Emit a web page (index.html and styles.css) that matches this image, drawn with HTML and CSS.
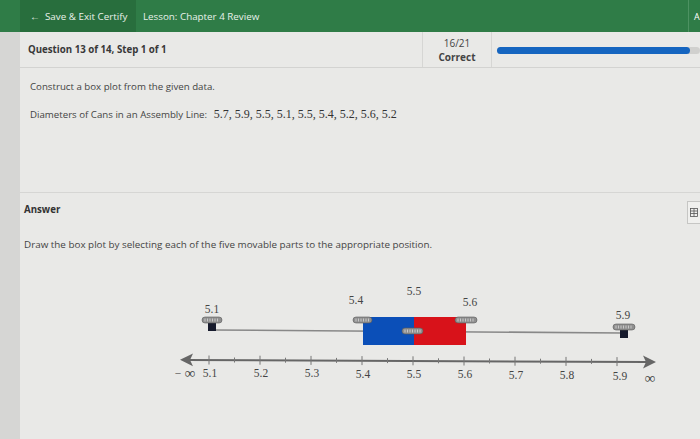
FILE: index.html
```html
<!DOCTYPE html>
<html>
<head>
<meta charset="utf-8">
<link rel="stylesheet" href="styles.css">
</head>
<body>
<div class="page">
  <header class="topbar">
    <div class="tb-pad"></div>
    <div class="tb-save"><span class="arrow">&#8592;</span> Save &amp; Exit Certify</div>
    <div class="tb-lesson">Lesson: Chapter 4 Review</div>
    <div class="tb-fill"></div>
    <div class="tb-right">A</div>
  </header>
  <div class="main">
    <div class="strip"></div>
    <div class="content">
      <div class="qheader">
        <div class="qtitle">Question 13 of 14, Step 1 of 1</div>
        <div class="score"><span class="frac">16/21</span><span class="corr">Correct</span></div>
        <div class="progress"><div class="bar"></div></div>
      </div>
      <section class="question">
        <p class="q1">Construct a box plot from the given data.</p>
        <p class="q2">Diameters of Cans in an Assembly Line: <span class="nums">5.7, 5.9, 5.5, 5.1, 5.5, 5.4, 5.2, 5.6, 5.2</span></p>
      </section>
      <section class="answer">
        <div class="ans-head">
          <h3 class="ans-title">Answer</h3>
          <div class="side-tab">
            <svg width="8" height="9" viewBox="0 0 8 9"><g fill="none" stroke="#555" stroke-width="0.8"><rect x="0.5" y="0.5" width="7" height="8"/><line x1="0.5" y1="3" x2="7.5" y2="3"/><line x1="0.5" y1="5.5" x2="7.5" y2="5.5"/><line x1="4" y1="0.5" x2="4" y2="8.5"/></g></svg>
          </div>
        </div>
        <p class="ans-text">Draw the box plot by selecting each of the five movable parts to the appropriate position.</p>
        <svg class="plot" width="680" height="174" viewBox="20 265 680 174">
          <!-- whisker line -->
          <line x1="213" y1="331" x2="622" y2="334" stroke="#888" stroke-width="1.6"/>
          <!-- box -->
          <rect x="363" y="318" width="51" height="28" fill="#0b4fb8"/>
          <rect x="414" y="318" width="52" height="28" fill="#d8121a"/>
          <!-- whisker squares -->
          <rect x="208" y="324" width="8" height="8" fill="#161a2c"/>
          <rect x="620" y="331" width="8" height="8" fill="#161a2c"/>
          <!-- handle labels -->
          <g font-family="Liberation Serif, serif" font-size="11.5" fill="#444" text-anchor="middle">
            <text x="212" y="314">5.1</text>
            <text x="356" y="305">5.4</text>
            <text x="414" y="296">5.5</text>
            <text x="470" y="307">5.6</text>
            <text x="623" y="320">5.9</text>
          </g>
          <!-- pills -->
          <g fill="#8f8f8f" stroke="#5a5a5a" stroke-width="0.6">
            <rect x="202" y="318" width="20" height="6" rx="3"/>
            <rect x="353" y="318" width="19" height="6" rx="3"/>
            <rect x="402" y="329" width="21" height="6" rx="3"/>
            <rect x="455" y="318" width="22" height="6" rx="3"/>
            <rect x="613" y="325" width="22" height="6" rx="3"/>
          </g>
          <g stroke="#eee" stroke-width="0.6">
            <path d="M205 319.5v3M207.5 319.5v3M210 319.5v3M212.5 319.5v3M215 319.5v3M217.5 319.5v3"/>
            <path d="M356 319.5v3M358.5 319.5v3M361 319.5v3M363.5 319.5v3M366 319.5v3M368.5 319.5v3"/>
            <path d="M405 330.5v3M407.5 330.5v3M410 330.5v3M412.5 330.5v3M415 330.5v3M417.5 330.5v3M420 330.5v3"/>
            <path d="M458 319.5v3M460.5 319.5v3M463 319.5v3M465.5 319.5v3M468 319.5v3M470.5 319.5v3M473 319.5v3"/>
            <path d="M616 326.5v3M618.5 326.5v3M621 326.5v3M623.5 326.5v3M626 326.5v3M628.5 326.5v3M631 326.5v3"/>
          </g>
          <!-- number line -->
          <line x1="186" y1="361" x2="648" y2="363" stroke="#666" stroke-width="2"/>
          <path d="M180 360.8 L193 354.5 L190 361 L193 367.2 Z" fill="#666"/>
          <path d="M656 363 L643 356.5 L646 363 L643 369.5 Z" fill="#666"/>
          <g stroke="#777" stroke-width="1">
            <path d="M209 356.5v9M234.5 358.5v5M260 356.7v9M285.5 358.7v5M311 356.9v9M336.5 358.9v5M362 357.1v9M387.5 359.1v5M413 357.3v9M438.5 359.3v5M464 357.5v9M489.5 359.5v5M515 357.7v9M540.5 359.7v5M566 357.9v9M591.5 359.9v5M617 358.1v9"/>
          </g>
          <g font-family="Liberation Serif, serif" font-size="11.5" fill="#444" text-anchor="middle">
            <text x="178" y="378">&#8722;</text>
            <text x="190" y="379" font-size="15">&#8734;</text>
            <text x="210" y="378">5.1</text>
            <text x="261" y="378">5.2</text>
            <text x="312" y="378">5.3</text>
            <text x="363" y="379">5.4</text>
            <text x="414" y="379">5.5</text>
            <text x="465" y="379">5.6</text>
            <text x="516" y="380">5.7</text>
            <text x="567" y="380">5.8</text>
            <text x="620" y="381">5.9</text>
            <text x="650" y="384" font-size="15">&#8734;</text>
          </g>
        </svg>
      </section>
    </div>
  </div>
</div>
</body>
</html>
```
FILE: styles.css
```css
* { box-sizing: border-box; }
html, body { margin: 0; padding: 0; }
body {
  width: 700px;
  height: 439px;
  overflow: hidden;
  background: #e7e7e5;
  font-family: "Open Sans", "Liberation Sans", sans-serif;
  color: #3a3a3a;
}
.page { width: 700px; height: 439px; display: flex; flex-direction: column; }
.topbar {
  height: 32px;
  display: flex;
  align-items: stretch;
  background: #2f7c47;
  color: #e8f1ea;
  font-size: 9.8px;
  flex: none;
}
.tb-pad { width: 20px; }
.tb-save {
  width: 116px;
  background: #286e3d;
  display: flex;
  align-items: center;
  padding-left: 10px;
  gap: 5px;
}
.arrow { font-size: 10px; }
.tb-lesson {
  display: flex;
  align-items: center;
  padding-left: 7px;
}
.tb-fill { flex: 1; }
.tb-right {
  width: 12px;
  border-left: 1px solid #4d9262;
  display: flex;
  align-items: center;
  padding-left: 5px;
  color: #fff;
  font-size: 9px;
}
.main { flex: 1; display: flex; }
.strip { width: 20px; background: #d6d6d4; flex: none; }
.content { flex: 1; display: flex; flex-direction: column; background: #e9e9e7; }
.qheader {
  height: 36px;
  display: flex;
  align-items: center;
  border-bottom: 1px solid #d3d3d1;
  flex: none;
}
.qtitle {
  width: 402px;
  padding-left: 8px;
  font-weight: 700;
  font-size: 9.7px;
  color: #383838;
}
.score {
  width: 70px;
  height: 100%;
  border-left: 1px solid #d6d6d4;
  border-right: 1px solid #d6d6d4;
  display: flex;
  flex-direction: column;
  align-items: center;
  justify-content: center;
  font-size: 10px;
  line-height: 14px;
  color: #444;
  padding-left: 0;
}
.corr { font-weight: 700; }
.progress {
  flex: 1;
  margin-left: 5px;
  height: 7px;
  background: #d0d0ce;
  border-radius: 4px;
  margin-top: 2px;
}
.bar { width: 193px; height: 7px; background: #1565c0; border-radius: 4px; }
.question {
  height: 125px;
  border-bottom: 1px solid #d6d6d4;
  padding-left: 10px;
  flex: none;
}
.question p { margin: 0; font-size: 9.7px; line-height: 13px; color: #444; }
.q1 { padding-top: 12px; }
.q2 { padding-top: 15px; }
.nums { font-family: "Liberation Serif", serif; font-size: 12px; color: #333; margin-left: 4px; }
.answer { flex: 1; display: flex; flex-direction: column; }
.ans-head { display: flex; align-items: center; height: 30px; }
.ans-title {
  margin: 0;
  flex: 1;
  padding-left: 4px;
  padding-top: 2px;
  font-size: 9.7px;
  font-weight: 700;
  color: #333;
}
.side-tab {
  width: 13px;
  height: 23px;
  border: 1px solid #c6c6c4;
  border-right: none;
  background: #f0f0ee;
  display: flex;
  align-items: center;
  justify-content: center;
  margin-top: 8px;
}
.ans-text { margin: 0; padding-left: 4px; padding-top: 15px; font-size: 9.85px; line-height: 13px; color: #444; }
.plot { display: block; margin-top: 13px; }
```
